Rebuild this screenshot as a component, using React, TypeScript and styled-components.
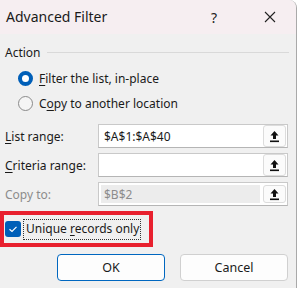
import React from 'react';
import styled, { createGlobalStyle } from 'styled-components';

const GlobalStyle = createGlobalStyle`
  html, body {
    margin: 0;
    padding: 0;
    background: #ffffff;
  }
  body {
    font-family: "Segoe UI", "Noto Sans", "Liberation Sans", sans-serif;
  }
`;

const Window = styled.div`
  width: 297px;
  height: 288px;
  background: #f0f0f0;
  border-right: 1px solid #a9a9a9;
  border-top-right-radius: 8px;
  overflow: hidden;
  box-sizing: border-box;
  display: flex;
  flex-direction: column;
  color: #1a1a1a;
  font-size: 12px;
`;

const TitleBar = styled.div`
  height: 34px;
  flex: none;
  background: #f6eef1;
  display: flex;
  align-items: center;
  padding-left: 6px;
`;

const Title = styled.div`
  flex: 1;
  font-size: 14px;
  color: #1a1a1a;
  padding-bottom: 2px;
`;

const TitleButton = styled.div<{ w: number }>`
  width: ${({ w }) => w}px;
  height: 34px;
  display: flex;
  align-items: center;
  justify-content: center;
  font-size: 14px;
  color: #222;
`;

const Body = styled.div`
  padding: 0 8px 0 5px;
  display: flex;
  flex-direction: column;
`;

const GroupHeader = styled.div`
  margin-top: 10px;
  height: 16px;
  display: flex;
  align-items: center;
  gap: 6px;
  &::after {
    content: '';
    flex: 1;
    height: 1px;
    background: #d9d9d9;
    margin-right: -1px;
  }
`;

const RadioList = styled.div`
  margin-top: 6px;
  padding-left: 13px;
  display: flex;
  flex-direction: column;
`;

const RadioRow = styled.div`
  height: 25px;
  display: flex;
  align-items: center;
  gap: 6px;
`;

const RadioDot = styled.span<{ checked?: boolean }>`
  width: 15px;
  height: 15px;
  border-radius: 50%;
  box-sizing: border-box;
  flex: none;
  background: ${({ checked }) => (checked ? '#ffffff' : '#f5f5f5')};
  border: ${({ checked }) => (checked ? '4px solid #005fb8' : '1px solid #8a8a8a')};
`;

const U = styled.span`
  text-decoration: underline;
  text-underline-offset: 2px;
`;

const Fields = styled.div`
  margin-top: 8px;
  display: flex;
  flex-direction: column;
  gap: 5px;
`;

const FieldRow = styled.div<{ disabled?: boolean }>`
  display: flex;
  align-items: center;
  color: ${({ disabled }) => (disabled ? '#8c8c8c' : '#1a1a1a')};
`;

const FieldLabel = styled.div`
  width: 93px;
  flex: none;
`;

const InputBox = styled.div<{ disabled?: boolean }>`
  width: 190px;
  height: 24px;
  box-sizing: border-box;
  border: 1px solid #c9c9c9;
  border-bottom-color: #b5b5b5;
  background: #ffffff;
  display: flex;
  align-items: stretch;
  padding: ${({ disabled }) => (disabled ? '2px 1px 2px 2px' : '0 1px 0 0')};
`;

const InputText = styled.div<{ disabled?: boolean }>`
  flex: 1;
  display: flex;
  align-items: center;
  padding-left: ${({ disabled }) => (disabled ? '3px' : '5px')};
  background: ${({ disabled }) => (disabled ? '#ececec' : 'transparent')};
  color: ${({ disabled }) => (disabled ? '#8c8c8c' : '#1a1a1a')};
  margin-right: ${({ disabled }) => (disabled ? '3px' : '0')};
`;

const CollapseButton = styled.div`
  width: 23px;
  flex: none;
  box-sizing: border-box;
  border: 1px solid #dcdcdc;
  border-radius: 3px;
  background: #fbfbfb;
  display: flex;
  align-items: center;
  justify-content: center;
`;

const HighlightBox = styled.div`
  margin: 5px 0 0 -5px;
  width: 153px;
  height: 36px;
  box-sizing: border-box;
  border: 4px solid #e8202e;
  display: flex;
  align-items: center;
  padding-left: 1px;
  gap: 3px;
`;

const CheckBox = styled.span`
  width: 16px;
  height: 16px;
  border-radius: 3px;
  background: #005fb8;
  display: flex;
  align-items: center;
  justify-content: center;
  flex: none;
`;

const FocusLabel = styled.span`
  outline: 1px dotted #333;
  padding: 1px 1px 2px 2px;
  line-height: 16px;
  font-size: 12px;
`;

const ButtonRow = styled.div`
  margin-top: 7px;
  display: flex;
  justify-content: flex-end;
  gap: 15px;
  padding-right: 0;
`;

const Button = styled.div<{ primary?: boolean }>`
  width: 108px;
  height: 27px;
  box-sizing: border-box;
  border-radius: 4px;
  background: #fdfdfd;
  border: 1px solid ${({ primary }) => (primary ? '#0067c0' : '#d0d0d0')};
  display: flex;
  align-items: center;
  justify-content: center;
  font-size: 12.5px;
  color: #1a1a1a;
`;

const UploadIcon = () => (
  <svg width="11" height="13" viewBox="0 0 11 13">
    <path d="M5.5 1 L9.5 5.5 H7 V9 H4 V5.5 H1.5 Z" fill="#111" />
    <rect x="1" y="10.5" width="9" height="1.6" fill="#111" />
  </svg>
);

const CloseIcon = () => (
  <svg width="12" height="12" viewBox="0 0 12 12">
    <path d="M1 1 L11 11 M11 1 L1 11" stroke="#222" strokeWidth="1.1" />
  </svg>
);

const CheckMark = () => (
  <svg width="10" height="8" viewBox="0 0 10 8">
    <path d="M1.5 4.2 L4 6.5 L8.5 1.8" stroke="#fff" strokeWidth="1.2" fill="none" />
  </svg>
);

const fields = [
  { label: <><U>L</U>ist range:</>, value: '$A$1:$A$40' },
  { label: <><U>C</U>riteria range:</>, value: '' },
  { label: <>Copy to:</>, value: '$B$2', disabled: true },
];

export default function App() {
  return (
    <>
      <GlobalStyle />
      <Window>
        <TitleBar>
          <Title>Advanced Filter</Title>
          <TitleButton w={38}>?</TitleButton>
          <TitleButton w={13} />
          <TitleButton w={48}>
            <CloseIcon />
          </TitleButton>
          <TitleButton w={2} />
        </TitleBar>
        <Body>
          <GroupHeader>Action</GroupHeader>
          <RadioList>
            <RadioRow>
              <RadioDot checked />
              <span>
                <U>F</U>ilter the list, in-place
              </span>
            </RadioRow>
            <RadioRow>
              <RadioDot />
              <span>
                C<U>o</U>py to another location
              </span>
            </RadioRow>
          </RadioList>
          <Fields>
            {fields.map((f, i) => (
              <FieldRow key={i} disabled={f.disabled}>
                <FieldLabel>{f.label}</FieldLabel>
                <InputBox disabled={f.disabled}>
                  <InputText disabled={f.disabled}>{f.value}</InputText>
                  <CollapseButton>
                    <UploadIcon />
                  </CollapseButton>
                </InputBox>
              </FieldRow>
            ))}
          </Fields>
          <HighlightBox>
            <CheckBox>
              <CheckMark />
            </CheckBox>
            <FocusLabel>
              Unique <U>r</U>ecords only
            </FocusLabel>
          </HighlightBox>
          <ButtonRow>
            <Button primary>OK</Button>
            <Button>Cancel</Button>
          </ButtonRow>
        </Body>
      </Window>
    </>
  );
}
